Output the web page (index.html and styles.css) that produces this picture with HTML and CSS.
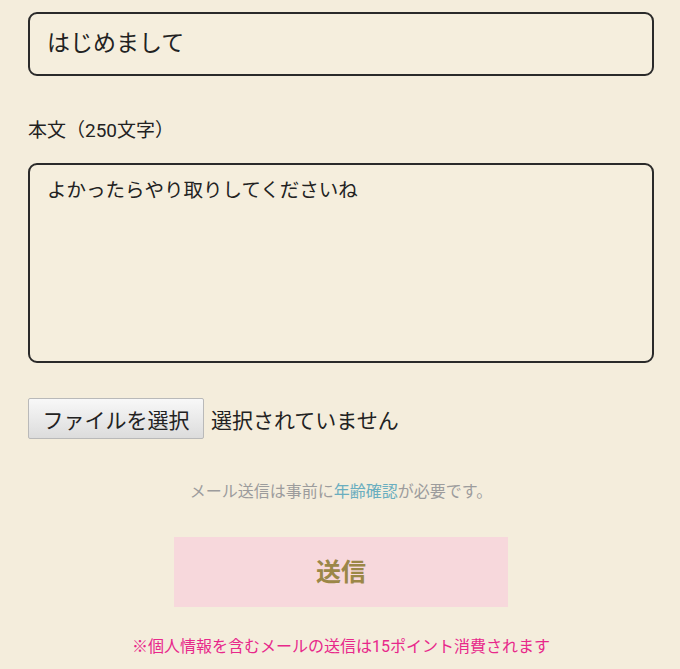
FILE: index.html
```html
<!DOCTYPE html>
<html lang="ja">
<head>
<meta charset="utf-8">
<link rel="stylesheet" href="styles.css">
</head>
<body>
<div class="form">
  <div class="field subject">はじめまして</div>
  <div class="label">本文（250文字）</div>
  <div class="field body">よかったらやり取りしてくださいね</div>
  <div class="file-row">
    <span class="file-btn">ファイルを選択</span>
    <span class="file-status">選択されていません</span>
  </div>
  <p class="note">メール送信は事前に<span class="link">年齢確認</span>が必要です。</p>
  <div class="send-wrap"><span class="send">送信</span></div>
  <p class="warn">※個人情報を含むメールの送信は15ポイント消費されます</p>
</div>
</body>
</html>
```
FILE: styles.css
```css
html, body {
  margin: 0;
  padding: 0;
  background: #f4eddc;
}
body {
  font-family: Roboto, "Noto Sans CJK JP", sans-serif;
  color: #222;
}
.form {
  padding: 12px 26px 0 28px;
}
.field {
  box-sizing: border-box;
  border: 2px solid #2a2a2a;
  border-radius: 9px;
  background: #f5eedd;
}
.subject {
  height: 64px;
  padding: 0 17px;
  font-size: 23px;
  line-height: 60px;
}
.label {
  margin-top: 42px;
  font-size: 19px;
  line-height: 26px;
  height: 26px;
}
.body {
  margin-top: 19px;
  height: 200px;
  padding: 12px 17px;
  font-size: 19.5px;
  line-height: 28px;
}
.file-row {
  margin-top: 35px;
  display: flex;
  align-items: center;
  gap: 7px;
  font-size: 21px;
}
.file-btn {
  box-sizing: border-box;
  width: 176px;
  height: 41px;
  display: flex;
  align-items: center;
  justify-content: center;
  border: 1px solid #b9b9b9;
  border-radius: 2px;
  background: linear-gradient(#f8f8f8, #dcdcdc);
  color: #222;
}
.file-status {
  color: #222;
}
.note {
  margin: 40px 0 0;
  text-align: center;
  font-size: 16px;
  line-height: 26px;
  color: #9c9c9c;
}
.link {
  color: #6aaebf;
}
.send-wrap {
  margin-top: 32px;
  display: flex;
  justify-content: center;
}
.send {
  box-sizing: border-box;
  width: 334px;
  height: 70px;
  padding-bottom: 4px;
  display: flex;
  align-items: center;
  justify-content: center;
  background: #f7d8dc;
  color: #9b8747;
  font-size: 25px;
  font-weight: bold;
}
.warn {
  margin: 27px 0 0;
  text-align: center;
  font-size: 16px;
  line-height: 26px;
  font-weight: 400;
  color: #e8288b;
}
```
